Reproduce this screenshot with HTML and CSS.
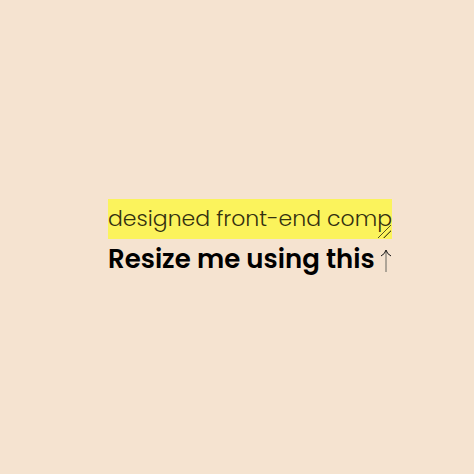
FILE: index.html
```html
<!DOCTYPE html>
<html lang="en">
<head>
<meta charset="utf-8">
<title>Resizable text</title>
<link rel="stylesheet" href="styles.css">
</head>
<body>
<main class="demo">
  <div class="resizable">designed front-end comp</div>
  <p class="hint">Resize me using this
    <svg class="arrow" viewBox="0 0 12 24" aria-hidden="true"><path d="M6 23V2"/><path class="head" d="M1 7Q5 5 6 1Q7 5 11 7"/></svg>
  </p>
</main>
</body>
</html>
```

FILE: styles.css
```css
body {
  box-sizing: border-box;
  margin: 0;
  padding: 4px 0 0 26px;
  min-height: 100vh;
  display: grid;
  place-items: center;
  background: #f5e3d0;
  color: #000;
  font-family: Poppins, Inter, "Open Sans", sans-serif;
}
.demo {
  width: 284px;
}
.resizable {
  box-sizing: border-box;
  height: 40px;
  overflow: hidden;
  resize: both;
  background: #fbf35c;
  color: #333010;
  font-size: 22px;
  font-weight: 300;
  line-height: 40px;
  white-space: nowrap;
}
.resizable::-webkit-resizer {
  background: linear-gradient(135deg, transparent 51%, #55521f 52%, #55521f 55%, transparent 56%, transparent 71%, #55521f 72%, #55521f 75%, transparent 76%) 0 0 / 14px 14px no-repeat;
}
.hint {
  display: flex;
  align-items: center;
  gap: 5px;
  margin: 0;
  font-size: 26px;
  font-weight: 600;
  line-height: 40px;
  white-space: nowrap;
}
.arrow {
  width: 12px;
  height: 24px;
  margin-top: 4px;
  fill: none;
  stroke: #66665f;
  stroke-width: 1;
}
.head {
  stroke: #111;
}
```
